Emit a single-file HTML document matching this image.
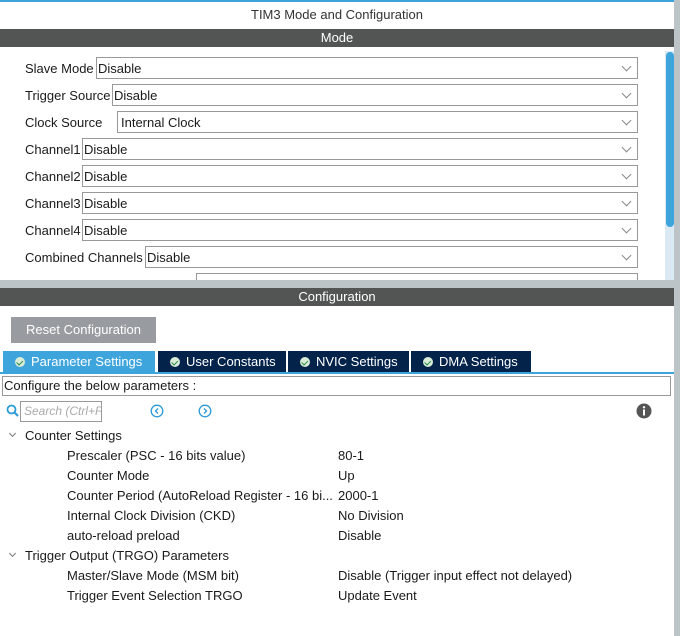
<!DOCTYPE html>
<html><head><style>
*{margin:0;padding:0;box-sizing:border-box}
body{width:680px;height:636px;position:relative;background:#fff;font-family:"Liberation Sans",sans-serif;font-size:13px;color:#1a1a1a;overflow:hidden}
.a{position:absolute}
.bar{position:absolute;left:0;width:674px;background:#535554;color:#fff;text-align:center;font-size:13px}
.lbl{position:absolute;left:25px;white-space:nowrap;line-height:16px}
.sel{position:absolute;height:22px;right:42px;border:1px solid #999;padding-left:1px;line-height:21px;white-space:nowrap;overflow:hidden}
.sel:after{content:"";position:absolute;right:7px;top:5px;width:6px;height:6px;border-right:1px solid #888;border-bottom:1px solid #888;transform:rotate(45deg)}
.tab{position:absolute;top:351px;height:21px;background:#03234b;color:#fff;line-height:21px;padding-left:12px;font-size:13px}
.tab i{display:inline-block;width:10px;height:10px;border-radius:50%;background:#d8ecd8;margin-right:6px;vertical-align:-1px;position:relative}
.tab i:after{content:"";position:absolute;left:3px;top:1.5px;width:2.5px;height:4.5px;border-right:1.5px solid #2a8a4a;border-bottom:1.5px solid #2a8a4a;transform:rotate(45deg)}
.r{position:absolute;white-space:nowrap}
.k{left:67px}.v{left:338px}
.chev{position:absolute;width:5px;height:5px;border-right:1px solid #777;border-bottom:1px solid #777;transform:rotate(45deg)}
</style></head><body>
<div class="a" style="left:0;top:0;width:680px;height:2px;background:#3ea4dc"></div>
<div class="a" style="left:674px;top:0;width:6px;height:636px;background:#bcc4c8"></div>
<div class="a" style="left:0;top:7px;width:674px;text-align:center;font-size:13px;color:#333">TIM3 Mode and Configuration</div>
<div class="bar" style="top:29px;height:18px;line-height:18px">Mode</div>
<div class="a" style="left:665px;top:51px;width:9px;height:229px;background:#dbe9f5"></div>
<div class="a" style="left:666px;top:52px;width:8px;height:175px;background:#3ea4dc;border-radius:4px"></div>

<div class="lbl" style="top:61px">Slave Mode</div><div class="sel" style="left:96px;top:57px">Disable</div>
<div class="lbl" style="top:88px">Trigger Source</div><div class="sel" style="left:112px;top:84px">Disable</div>
<div class="lbl" style="top:115px">Clock Source</div><div class="sel" style="left:117px;top:111px;padding-left:3px">Internal Clock</div>
<div class="lbl" style="top:142px">Channel1</div><div class="sel" style="left:82px;top:138px">Disable</div>
<div class="lbl" style="top:169px">Channel2</div><div class="sel" style="left:82px;top:165px">Disable</div>
<div class="lbl" style="top:196px">Channel3</div><div class="sel" style="left:82px;top:192px">Disable</div>
<div class="lbl" style="top:223px">Channel4</div><div class="sel" style="left:82px;top:219px">Disable</div>
<div class="lbl" style="top:250px">Combined Channels</div><div class="sel" style="left:145px;top:246px">Disable</div>
<div class="sel" style="left:196px;top:273px;height:8px;border-bottom:none"></div>

<div class="a" style="left:0;top:280px;width:674px;height:8px;background:#bcc4c8"></div>
<div class="bar" style="top:288px;height:18px;line-height:18px">Configuration</div>
<div class="a" style="left:11px;top:317px;width:145px;height:26px;background:#989ca0;color:#fff;text-align:center;line-height:26px">Reset Configuration</div>

<div class="tab" style="left:3px;width:152px;background:#3ea4dc"><i></i>Parameter Settings</div>
<div class="tab" style="left:158px;width:128px"><i></i>User Constants</div>
<div class="tab" style="left:288px;width:121px"><i></i>NVIC Settings</div>
<div class="tab" style="left:411px;width:120px"><i></i>DMA Settings</div>
<div class="a" style="left:0;top:372px;width:674px;height:2px;background:#3ea4dc"></div>
<div class="a" style="left:2px;top:376px;width:669px;height:20px;border:1px solid #999;line-height:18px;padding-left:1px">Configure the below parameters :</div>

<svg class="a" style="left:6px;top:404px" width="13" height="13"><circle cx="5.5" cy="5.5" r="4" fill="none" stroke="#2a9ad6" stroke-width="1.8"/><line x1="8.5" y1="8.5" x2="12" y2="12" stroke="#2a9ad6" stroke-width="2"/></svg>
<div class="a" style="left:20px;top:401px;width:82px;height:21px;border:1px solid #999;color:#aaa;font-style:italic;line-height:19px;padding-left:3px;white-space:nowrap;overflow:hidden;font-size:12px">Search (Ctrl+F)</div>
<svg class="a" style="left:150px;top:404px" width="14" height="14"><circle cx="7" cy="7" r="5.8" fill="none" stroke="#2a9ad6" stroke-width="1.3"/><path d="M8 4.5L5.5 7L8 9.5" fill="none" stroke="#2a9ad6" stroke-width="1.3"/></svg>
<svg class="a" style="left:198px;top:404px" width="14" height="14"><circle cx="7" cy="7" r="5.8" fill="none" stroke="#2a9ad6" stroke-width="1.3"/><path d="M6 4.5L8.5 7L6 9.5" fill="none" stroke="#2a9ad6" stroke-width="1.3"/></svg>
<svg class="a" style="left:636px;top:403px" width="16" height="16"><circle cx="8" cy="8" r="7.5" fill="#555"/><rect x="7" y="6.5" width="2" height="6" fill="#fff"/><circle cx="8" cy="4.3" r="1.2" fill="#fff"/></svg>

<div class="chev" style="left:10px;top:431px"></div>
<div class="r" style="left:25px;top:428px">Counter Settings</div>
<div class="r k" style="top:448px">Prescaler (PSC - 16 bits value)</div><div class="r v" style="top:448px">80-1</div>
<div class="r k" style="top:468px">Counter Mode</div><div class="r v" style="top:468px">Up</div>
<div class="r k" style="top:488px">Counter Period (AutoReload Register - 16 bi...</div><div class="r v" style="top:488px">2000-1</div>
<div class="r k" style="top:508px">Internal Clock Division (CKD)</div><div class="r v" style="top:508px">No Division</div>
<div class="r k" style="top:528px">auto-reload preload</div><div class="r v" style="top:528px">Disable</div>
<div class="chev" style="left:10px;top:551px"></div>
<div class="r" style="left:25px;top:548px">Trigger Output (TRGO) Parameters</div>
<div class="r k" style="top:568px">Master/Slave Mode (MSM bit)</div><div class="r v" style="top:568px">Disable (Trigger input effect not delayed)</div>
<div class="r k" style="top:588px">Trigger Event Selection TRGO</div><div class="r v" style="top:588px">Update Event</div>
</body></html>
